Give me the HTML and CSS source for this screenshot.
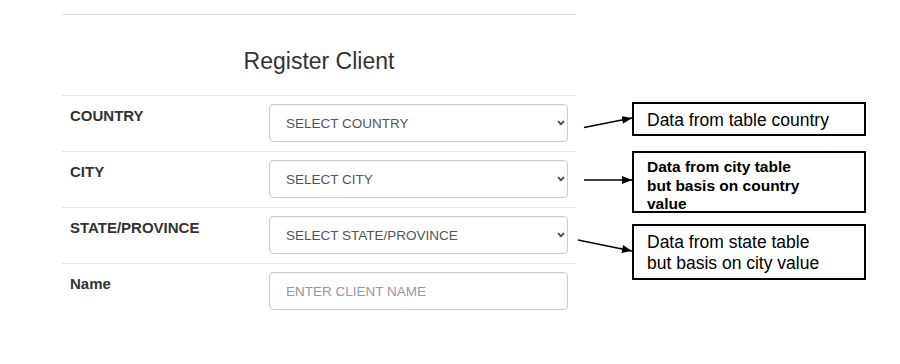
FILE: index.html
```html
<!DOCTYPE html>
<html lang="en">

<head>
  <meta charset="UTF-8">
  <meta name="viewport" content="width=device-width, initial-scale=1.0">
  <title>Register Client</title>
  <link rel="stylesheet" href="styles.css">
</head>

<body>
  <div class="page">
    <form class="client-form">
      <h3 class="form-title">Register Client</h3>

      <div class="form-row">
        <label class="form-label" for="country">COUNTRY</label>
        <div class="select-wrap">
          <select id="country" class="form-control">
            <option>SELECT COUNTRY</option>
          </select>
          <svg class="chevron" width="8" height="6" viewBox="0 0 8 6"><path d="M1 1.2l3 3 3-3" fill="none" stroke="#444" stroke-width="1.7"/></svg>
        </div>
      </div>

      <div class="form-row">
        <label class="form-label" for="city">CITY</label>
        <div class="select-wrap">
          <select id="city" class="form-control">
            <option>SELECT CITY</option>
          </select>
          <svg class="chevron" width="8" height="6" viewBox="0 0 8 6"><path d="M1 1.2l3 3 3-3" fill="none" stroke="#444" stroke-width="1.7"/></svg>
        </div>
      </div>

      <div class="form-row">
        <label class="form-label" for="state">STATE/PROVINCE</label>
        <div class="select-wrap">
          <select id="state" class="form-control">
            <option>SELECT STATE/PROVINCE</option>
          </select>
          <svg class="chevron" width="8" height="6" viewBox="0 0 8 6"><path d="M1 1.2l3 3 3-3" fill="none" stroke="#444" stroke-width="1.7"/></svg>
        </div>
      </div>

      <div class="form-row">
        <label class="form-label" for="name">Name</label>
        <input id="name" class="form-control" type="text" placeholder="ENTER CLIENT NAME">
      </div>
    </form>
  </div>

  <!-- notes drawn over the screenshot -->
  <svg class="arrows" width="900" height="364">
    <defs>
      <marker id="head" markerWidth="10" markerHeight="8" refX="10" refY="4" orient="auto" markerUnits="userSpaceOnUse">
        <path d="M0 0L10 4L0 8z" fill="#000"/>
      </marker>
    </defs>
    <line x1="584" y1="127.5" x2="632" y2="118" stroke="#000" stroke-width="1.5" marker-end="url(#head)"/>
    <line x1="584" y1="180" x2="632" y2="180" stroke="#000" stroke-width="1.5" marker-end="url(#head)"/>
    <line x1="578" y1="240" x2="632" y2="251" stroke="#000" stroke-width="1.5" marker-end="url(#head)"/>
  </svg>

  <div class="note note-country">Data from table country</div>
  <div class="note note-city">Data from city table<br>but basis on country<br>value</div>
  <div class="note note-state">Data from state table<br>but basis on city value</div>
</body>

</html>
```

FILE: styles.css
```css
body {
  font-family: "Liberation Sans", Arial, sans-serif;
  background-color: #fff;
  color: #333;
  margin: 0;
  padding: 0;
}

.page {
  padding: 14px 0 0 62px;
}

.client-form {
  width: 514px;
  border-top: 1px solid #e3e3e3;
}

.form-title {
  margin: 0;
  height: 80px;
  box-sizing: border-box;
  padding-top: 33px;
  text-align: center;
  font-size: 23px;
  line-height: 26px;
  font-weight: normal;
  color: #333;
}

.form-row {
  display: grid;
  grid-template-columns: 191px 1fr;
  column-gap: 8px;
  padding: 8px 8px 9px;
  border-top: 1px solid #e3e3e3;
}

.form-label {
  padding-top: 2px;
  font-size: 15px;
  line-height: 20px;
  font-weight: bold;
  color: #333;
}

.select-wrap {
  position: relative;
}

.form-control {
  display: block;
  width: 100%;
  height: 38px;
  box-sizing: border-box;
  padding: 6px 16px;
  font-family: "Liberation Sans", Arial, sans-serif;
  font-size: 13.5px;
  color: #555;
  background-color: #fff;
  border: 1px solid #ccc;
  border-radius: 4px;
  box-shadow: inset 0 1px 1px rgba(0, 0, 0, 0.05);
  appearance: none;
  -webkit-appearance: none;
  outline: none;
}

.form-control::placeholder {
  color: #999;
}

.chevron {
  position: absolute;
  right: 3px;
  top: 16px;
}

.arrows {
  position: absolute;
  left: 0;
  top: 0;
}

.note {
  position: absolute;
  left: 632px;
  width: 234px;
  box-sizing: border-box;
  padding: 6px 13px;
  border: 2px solid #000;
  background-color: #fff;
  color: #000;
  font-size: 17.5px;
  line-height: 21px;
}

.note-country {
  top: 102px;
  height: 34px;
}

.note-city {
  top: 151px;
  height: 62px;
  padding-top: 5px;
  font-size: 15.5px;
  line-height: 18.5px;
  font-weight: bold;
}

.note-state {
  top: 224px;
  height: 56px;
}
```
